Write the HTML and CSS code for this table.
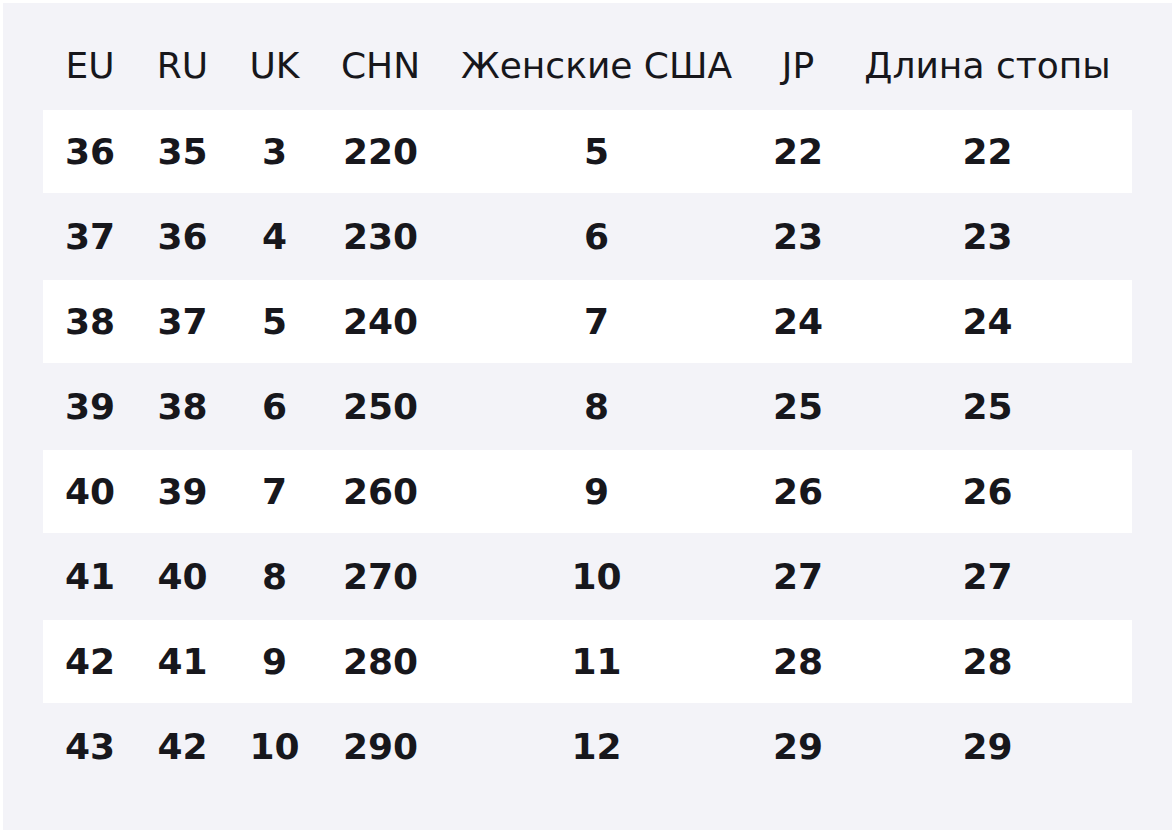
FILE: index.html
```html
<!DOCTYPE html>
<html lang="ru">
<head>
<meta charset="utf-8">
<title>Таблица размеров</title>
<link rel="stylesheet" href="styles.css">
</head>
<body>
<div class="panel">
  <table class="sizes">
    <colgroup>
      <col class="c-eu"><col class="c-ru"><col class="c-uk"><col class="c-chn"><col class="c-us"><col class="c-jp"><col class="c-len">
    </colgroup>
    <thead>
      <tr><th>EU</th><th>RU</th><th>UK</th><th>CHN</th><th>Женские США</th><th>JP</th><th>Длина стопы</th></tr>
    </thead>
    <tbody>
      <tr><td>36</td><td>35</td><td>3</td><td>220</td><td>5</td><td>22</td><td>22</td></tr>
      <tr><td>37</td><td>36</td><td>4</td><td>230</td><td>6</td><td>23</td><td>23</td></tr>
      <tr><td>38</td><td>37</td><td>5</td><td>240</td><td>7</td><td>24</td><td>24</td></tr>
      <tr><td>39</td><td>38</td><td>6</td><td>250</td><td>8</td><td>25</td><td>25</td></tr>
      <tr><td>40</td><td>39</td><td>7</td><td>260</td><td>9</td><td>26</td><td>26</td></tr>
      <tr><td>41</td><td>40</td><td>8</td><td>270</td><td>10</td><td>27</td><td>27</td></tr>
      <tr><td>42</td><td>41</td><td>9</td><td>280</td><td>11</td><td>28</td><td>28</td></tr>
      <tr><td>43</td><td>42</td><td>10</td><td>290</td><td>12</td><td>29</td><td>29</td></tr>
    </tbody>
  </table>
</div>
</body>
</html>
```
FILE: styles.css
```css
html, body {
  margin: 0;
  padding: 0;
  background: #ffffff;
}
body {
  padding: 3px;
  font-family: "DejaVu Sans", "Noto Sans", sans-serif;
  color: #17171c;
}
.panel {
  background: #f3f3f8;
  padding: 40px;
}
.sizes {
  width: 100%;
  table-layout: fixed;
  border-collapse: separate;
  border-spacing: 0 2px;
  font-size: 36px;
}
.c-eu { width: 94px; }
.c-ru { width: 91px; }
.c-uk { width: 93px; }
.c-chn { width: 119px; }
.c-us { width: 313px; }
.c-jp { width: 90px; }
.c-len { width: 289px; }
.sizes th {
  font-weight: normal;
  text-align: center;
  vertical-align: top;
  height: 63px;
  padding: 0;
  line-height: 42px;
  white-space: nowrap;
}
.sizes td {
  font-weight: bold;
  text-align: center;
  vertical-align: middle;
  height: 83px;
  padding: 0;
  line-height: 42px;
  white-space: nowrap;
}
.sizes tbody tr:nth-child(odd) td {
  background: #ffffff;
}
```
